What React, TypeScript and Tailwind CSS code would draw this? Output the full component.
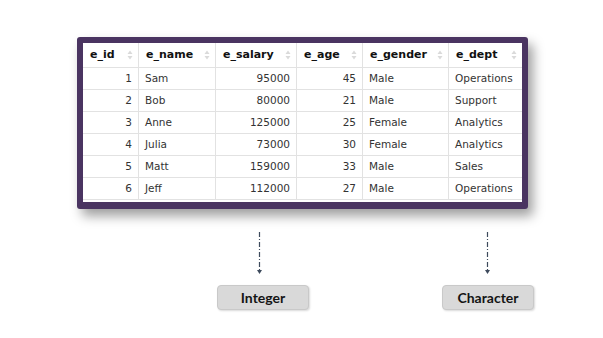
import React from "react";

const cols = [
  { key: "e_id", w: 56, num: true },
  { key: "e_name", w: 77, num: false },
  { key: "e_salary", w: 81, num: true },
  { key: "e_age", w: 66, num: true },
  { key: "e_gender", w: 86, num: false },
  { key: "e_dept", w: 73, num: false },
];

const rows = [
  ["1", "Sam", "95000", "45", "Male", "Operations"],
  ["2", "Bob", "80000", "21", "Male", "Support"],
  ["3", "Anne", "125000", "25", "Female", "Analytics"],
  ["4", "Julia", "73000", "30", "Female", "Analytics"],
  ["5", "Matt", "159000", "33", "Male", "Sales"],
  ["6", "Jeff", "112000", "27", "Male", "Operations"],
];

function SortIcon() {
  return (
    <svg width="6" height="10" viewBox="0 0 6 10" className="shrink-0">
      <path d="M3 0.5 L5.5 4 L0.5 4 Z" fill="#dadada" />
      <path d="M3 9.5 L5.5 6 L0.5 6 Z" fill="#dadada" />
    </svg>
  );
}

function Arrow({ x }: { x: number }) {
  return (
    <svg width="92" height="47" viewBox="0 0 92 47" className="block">
      <line
        x1={x}
        y1="0"
        x2={x}
        y2="39"
        stroke="#3d4a5c"
        strokeWidth="1.2"
        strokeDasharray="5 2 1 2"
      />
      <path d={`M${x - 2.5} 38 L${x + 2.5} 38 L${x} 42 Z`} fill="#3d4a5c" />
    </svg>
  );
}

function Label({ text }: { text: string }) {
  return (
    <div className="w-[92px] h-[25px] rounded-[4px] bg-[#d9d9d9] border border-[#c9c9c9] shadow-[1px_1px_2px_rgba(0,0,0,0.15)] flex items-center justify-center text-[14px] font-bold text-[#141414] [font-family:Lato,'Open_Sans',sans-serif]">
      {text}
    </div>
  );
}

export default function App() {
  return (
    <div className="w-[603px] h-[338px] bg-white overflow-hidden flex flex-col [font-family:'DejaVu_Sans',sans-serif]">
      <div className="ml-[77px] mt-[37px] w-[451px] rounded-[3px] border-[6px] border-b-[7px] border-[#4a3461] bg-white shadow-[5px_7px_12px_rgba(0,0,0,0.38)]">
        <div className="bg-white pb-[2px]">
          <div className="grid grid-cols-[56px_77px_81px_66px_86px_73px]">
            {cols.map((c, i) => (
              <div
                key={c.key}
                className={`h-[25px] flex items-center justify-between pl-[7px] pr-[5px] border-b border-[#e2e2e2] text-[11px] font-bold text-[#111] ${
                  i < cols.length - 1 ? "border-r" : ""
                }`}
              >
                <span>{c.key}</span>
                <SortIcon />
              </div>
            ))}
            {rows.map((r, ri) =>
              r.map((v, ci) => (
                <div
                  key={`${ri}-${ci}`}
                  className={`h-[22px] flex items-center border-b border-[#e2e2e2] text-[10.5px] text-[#333] ${
                    ci < cols.length - 1 ? "border-r" : ""
                  } ${cols[ci].num ? "justify-end pr-[6px]" : "justify-start pl-[6px]"}`}
                >
                  {v}
                </div>
              ))
            )}
          </div>
        </div>
      </div>
      <div className="mt-[23px] ml-[217px] flex gap-[133px]">
        <div className="flex flex-col w-[92px]">
          <Arrow x={42.5} />
          <div className="mt-[6px]">
            <Label text="Integer" />
          </div>
        </div>
        <div className="flex flex-col w-[92px]">
          <Arrow x={45.5} />
          <div className="mt-[6px]">
            <Label text="Character" />
          </div>
        </div>
      </div>
    </div>
  );
}
